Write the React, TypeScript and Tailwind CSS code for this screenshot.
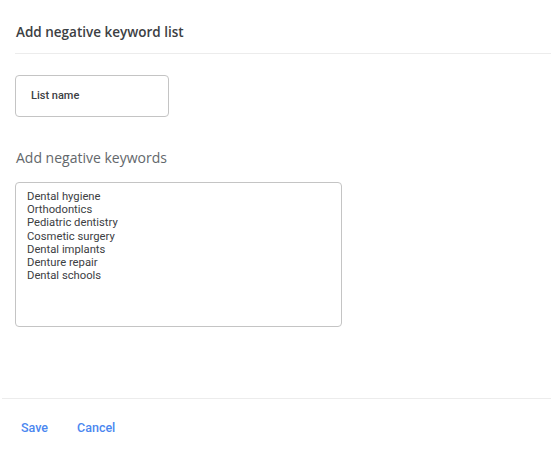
import { useState } from 'react';

const keywords = [
    'Dental hygiene',
    'Orthodontics',
    'Pediatric dentistry',
    'Cosmetic surgery',
    'Dental implants',
    'Denture repair',
    'Dental schools',
];

export default function App() {
    const [listName, setListName] = useState('');
    const [text, setText] = useState(keywords.join('\n'));

    return (
        <div className="w-[551px] h-[451px] bg-white flex flex-col font-['Roboto',_'Liberation_Sans',_sans-serif] text-[#3c4043]">
            {/* Header */}
            <div className="h-[54px] ml-[15px] border-b border-[#ececec] flex items-center pt-[12px]">
                <h1 className="pl-[1px] font-['Open_Sans',_sans-serif] text-[13.5px] font-semibold text-[#3c4043]">Add negative keyword list</h1>
            </div>

            {/* Body */}
            <div className="flex-1 px-[15px] pt-[21px]">
                <div className="w-[154px] h-[42px] rounded-[4px] border border-[#c4c4c4] flex items-center px-[15px]">
                    <input
                        value={listName}
                        onChange={(e) => setListName(e.target.value)}
                        placeholder="List name"
                        className="w-full outline-none bg-transparent text-[11px] font-medium text-[#3c4043] placeholder:text-[#3c4043]"
                    />
                </div>

                <h2 className="mt-[31px] pl-[1px] font-['Open_Sans',_sans-serif] text-[14px] text-[#63676b] leading-[20px]">Add negative keywords</h2>

                <textarea
                    value={text}
                    onChange={(e) => setText(e.target.value)}
                    className="mt-[14px] block w-[327px] h-[145px] resize-none rounded-[4px] border border-[#c4c4c4] px-[11px] pt-[7px] text-[11.25px] leading-[13.2px] text-[#3c4043] outline-none"
                />
            </div>

            {/* Footer */}
            <div className="ml-[2px] border-t border-[#ececec] h-[53px] flex items-center gap-[29px] pl-[19px] pt-[6px]">
                <button className="text-[12.5px] font-medium text-[#4b87f0]">Save</button>
                <button className="text-[12.5px] font-medium text-[#4b87f0]">Cancel</button>
            </div>
        </div>
    );
}
